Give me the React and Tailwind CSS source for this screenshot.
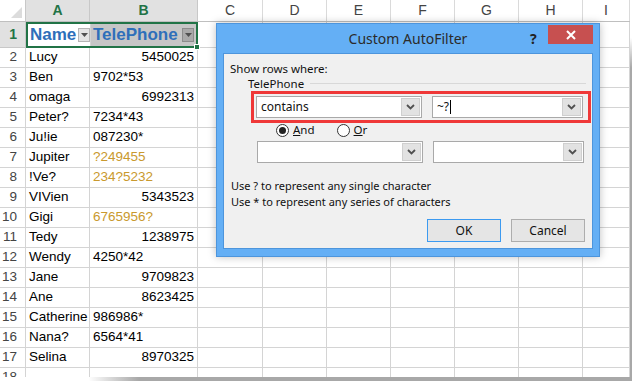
import React from "react";

const rows = [
  ["Lucy", "5450025", "r"],
  ["Ben", "9702*53", "l"],
  ["omaga", "6992313", "r"],
  ["Peter?", "7234*43", "l"],
  ["Ju!ie", "087230*", "l"],
  ["Jupiter", "?249455", "o"],
  ["!Ve?", "234?5232", "o"],
  ["VIVien", "5343523", "r"],
  ["Gigi", "6765956?", "o"],
  ["Tedy", "1238975", "r"],
  ["Wendy", "4250*42", "l"],
  ["Jane", "9709823", "r"],
  ["Ane", "8623425", "r"],
  ["Catherine", "986986*", "l"],
  ["Nana?", "6564*41", "l"],
  ["Selina", "8970325", "r"],
];

const rest = ["w-[65px]", "w-[64px]", "w-[64px]", "w-[64px]", "w-[64px]", "w-[64px]", "w-[47px]"];
const restLetters = ["C", "D", "E", "F", "G", "H", "I"];

function FilterBtn({ dark }) {
  return (
    <div
      className={`w-[12px] h-[14px] border flex items-center justify-center ${
        dark ? "bg-[#a9a9a9] border-[#8c8c8c]" : "bg-[#e4e4e4] border-[#b5b5b5]"
      }`}
    >
      <svg width="7" height="4" viewBox="0 0 7 4">
        <path d="M0 0h7L3.5 4z" fill="#505050" />
      </svg>
    </div>
  );
}

function HeaderRow() {
  return (
    <div className="flex h-[22px] border-b border-[#bfbfbf]">
      <div className="w-[26px] shrink-0 border-r border-[#c8c8c8] flex items-end justify-end p-[3px]">
        <svg width="11" height="11" viewBox="0 0 11 11">
          <path d="M11 0v11H0z" fill="#dcdcdc" />
        </svg>
      </div>
      <div className="w-[64px] shrink-0 bg-[#e1e1e1] border-r border-[#c8c8c8] flex items-center justify-center text-[#217346] font-bold text-[14px]">
        A
      </div>
      <div className="w-[108px] shrink-0 bg-[#e1e1e1] border-r border-[#c8c8c8] flex items-center justify-center text-[#217346] font-bold text-[14px]">
        B
      </div>
      {rest.map((w, i) => (
        <div
          key={i}
          className={`${w} shrink-0 border-r border-[#dadada] flex items-center justify-center text-[#444] text-[14px]`}
        >
          {restLetters[i]}
        </div>
      ))}
    </div>
  );
}

function BlankCells() {
  return rest.map((w, i) => (
    <div key={i} className={`${w} shrink-0 border-r border-b border-[#d4d4d4]`} />
  ));
}

function DataRow({ n, name, val, kind }) {
  return (
    <div className="flex h-[20px]">
      <div className="w-[26px] shrink-0 border-r border-b border-[#d4d4d4] flex items-center justify-end pr-[8px] text-[#444] text-[13.5px]">
        {n}
      </div>
      <div className="w-[64px] shrink-0 border-r border-b border-[#d4d4d4] flex items-center pl-[3px] text-[13.5px] text-black whitespace-nowrap overflow-visible">
        {name}
      </div>
      <div
        className={`w-[108px] shrink-0 border-r border-b border-[#d4d4d4] flex items-center px-[3px] text-[13.5px] ${
          kind === "r" ? "justify-end" : "justify-start"
        } ${kind === "o" ? "text-[#c9992e]" : "text-black"}`}
      >
        {val}
      </div>
      <BlankCells />
    </div>
  );
}

function Chevron() {
  return (
    <svg width="9" height="6" viewBox="0 0 9 6">
      <path d="M1 1l3.5 3.5L8 1" fill="none" stroke="#505050" strokeWidth="1.8" />
    </svg>
  );
}

function Combo({ w, children }) {
  return (
    <div className={`flex h-[22px] ${w} border border-[#a9a9a9] bg-white`}>
      <div className="flex-1 flex items-center pl-[4px] text-[12px] text-[#111]">{children}</div>
      <div className="w-[19px] m-[1px] flex items-center justify-center bg-[#e2e2e2] border border-[#cfcfcf]">
        <Chevron />
      </div>
    </div>
  );
}

function Radio({ on, label, rest }) {
  return (
    <div className="flex items-center gap-[4px]">
      <div className="w-[13px] h-[13px] rounded-full border border-[#333] bg-white flex items-center justify-center">
        {on && <div className="w-[7px] h-[7px] rounded-full bg-[#222]" />}
      </div>
      <span className="text-[11.5px] text-[#111]">
        <span className="underline">{label}</span>
        {rest}
      </span>
    </div>
  );
}

function Dialog() {
  return (
    <div className="absolute left-[216px] top-[23px] w-[384px] h-[234px] bg-[#64aff5] border border-[#4d95dc] shadow-[0_0_8px_rgba(0,0,0,0.25)] flex flex-col font-['Noto_Sans',sans-serif]">
      <div className="h-[29px] shrink-0 relative flex items-center justify-center">
        <span className="text-[14px] text-[#2b2b2b]">Custom AutoFilter</span>
        <span className="absolute left-[313px] top-[4px] text-[14px] font-bold text-[#222]">?</span>
        <div className="absolute right-[6px] top-[1px] w-[45px] h-[19px] bg-[#c75050] flex items-center justify-center">
          <svg width="10" height="10" viewBox="0 0 10 10">
            <path d="M1 1l8 8M9 1l-8 8" stroke="#fff" strokeWidth="2" />
          </svg>
        </div>
      </div>
      <div className="flex-1 mx-[6px] mb-[7px] bg-[#f0f0f0] border border-[#4d95dc] flex flex-col text-[#111]">
        <div className="pl-[6px] pt-[7px] text-[11.5px] leading-[15px]">Show rows where:</div>
        <div className="flex items-center pl-[24px] pr-[6px] h-[15px]">
          <span className="text-[11.5px] leading-[15px]">TelePhone</span>
          <div className="flex-1 ml-[6px] border-t border-[#d8d8d8]" />
        </div>
        <div className="ml-[27px] mr-[1px] h-[32px] border-[3px] border-[#ef3838] flex items-center gap-[10px] px-[2px]">
          <Combo w="w-[166px]">contains</Combo>
          <Combo w="w-[151px]">
            <span>~?</span>
            <span className="w-[1px] h-[14px] bg-black ml-[1px]" />
          </Combo>
        </div>
        <div className="flex items-center gap-[22px] pl-[52px] h-[14px]">
          <Radio on label="A" rest="nd" />
          <Radio label="O" rest="r" />
        </div>
        <div className="flex gap-[10px] pl-[33px] mt-[4px]">
          <Combo w="w-[166px]" />
          <Combo w="w-[151px]" />
        </div>
        <div className="pl-[7px] mt-[15px] text-[11px] leading-[16px]">
          <div>Use ? to represent any single character</div>
          <div>Use * to represent any series of characters</div>
        </div>
        <div className="flex justify-end gap-[10px] pr-[7px] mt-[9px]">
          <div className="w-[74px] h-[23px] border border-[#3c9af0] bg-[#e5e5e5] flex items-center justify-center text-[12px]">
            OK
          </div>
          <div className="w-[74px] h-[23px] border border-[#adadad] bg-[#e5e5e5] flex items-center justify-center text-[12px]">
            Cancel
          </div>
        </div>
      </div>
    </div>
  );
}

export default function App() {
  return (
    <div className="relative w-[632px] h-[381px] bg-white overflow-hidden font-['Liberation_Sans',Arial,sans-serif]">
      <div className="flex">
        <div className="w-[630px] h-[377px] overflow-hidden bg-white">
          <HeaderRow />
          <div className="flex h-[26px] relative">
            <div className="w-[26px] shrink-0 bg-[#e1e1e1] border-r border-b border-[#c8c8c8] flex items-center justify-end pr-[8px] text-[#217346] font-bold text-[14px]">
              1
            </div>
            <div className="w-[172px] shrink-0 flex border-2 border-[#217346] relative">
              <div className="w-[62px] shrink-0 flex items-center pl-[2px] bg-white overflow-hidden">
                <span className="text-[17px] font-bold text-[#2e6fba] whitespace-nowrap">Name</span>
                <div className="ml-auto">
                  <FilterBtn />
                </div>
              </div>
              <div className="flex-1 flex items-center pl-[2px] pr-[2px] bg-[#c6c6c6] border-l border-[#d4d4d4]">
                <span className="text-[17px] font-bold text-[#2e6fba] whitespace-nowrap">TelePhone</span>
                <div className="ml-auto">
                  <FilterBtn dark />
                </div>
              </div>
              <div className="absolute right-[-4px] bottom-[-4px] w-[6px] h-[6px] bg-[#217346] border border-white" />
            </div>
            <BlankCells />
          </div>
          {rows.map((r, i) => (
            <DataRow key={i} n={i + 2} name={r[0]} val={r[1]} kind={r[2]} />
          ))}
          <DataRow n={18} name="" val="" kind="l" />
        </div>
        <div className="w-[2px] h-[377px] bg-gradient-to-b from-white from-[10%] to-[#a8a8a8] to-[18%]" />
      </div>
      <div className="h-[4px] w-[632px] bg-gradient-to-r from-white from-[14%] to-[#a8a8a8] to-[22%]" />
      <Dialog />
    </div>
  );
}
